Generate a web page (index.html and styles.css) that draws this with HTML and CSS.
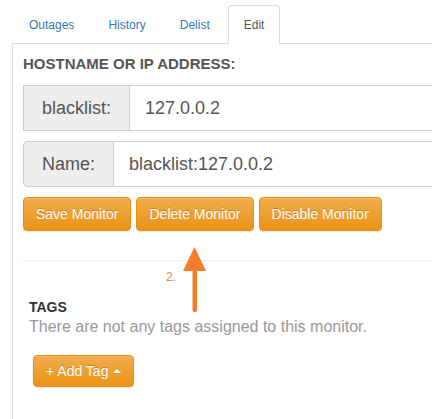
FILE: index.html
```html
<!DOCTYPE html>
<html>
<head>
<meta charset="utf-8">
<title>Edit Monitor</title>
<link rel="stylesheet" href="styles.css">
</head>
<body>
<div class="page">
  <ul class="tabs">
    <li class="tab"><a href="#">Outages</a></li>
    <li class="tab"><a href="#">History</a></li>
    <li class="tab"><a href="#">Delist</a></li>
    <li class="tab active"><a href="#">Edit</a></li>
  </ul>
  <div class="panel">
    <h4 class="heading">HOSTNAME OR IP ADDRESS:</h4>
    <div class="input-group square">
      <span class="addon">blacklist:</span>
      <input class="field" type="text" value="127.0.0.2" readonly>
    </div>
    <div class="input-group rounded">
      <span class="addon">Name:</span>
      <input class="field" type="text" value="blacklist:127.0.0.2" readonly>
    </div>
    <div class="actions">
      <button class="btn">Save Monitor</button>
      <button class="btn">Delete Monitor</button>
      <button class="btn">Disable Monitor</button>
    </div>
    <hr class="divider">
    <h5 class="tags-title">TAGS</h5>
    <p class="tags-empty">There are not any tags assigned to this monitor.</p>
    <button class="btn btn-sm add-tag">+ Add Tag <span class="caret"></span></button>
  </div>
  <span class="step">2.</span>
  <svg class="arrow" width="24" height="66" viewBox="0 0 24 66">
    <polygon points="11.5,0 0,24 23,24" fill="#f47d2a"/>
    <rect x="9.5" y="20" width="4.5" height="45" rx="2" fill="#f47d2a"/>
  </svg>
</div>
</body>
</html>
```
FILE: styles.css
```css
html, body {
  margin: 0;
  padding: 0;
  background: #fff;
  overflow: hidden;
}
body {
  font-family: "Liberation Sans", Arial, sans-serif;
  color: #333;
}
.page {
  position: relative;
  width: 432px;
  height: 419px;
  overflow: hidden;
}
.tabs {
  list-style: none;
  margin: 5px 0 0 0;
  padding: 0 0 0 13px;
  display: flex;
}
.tab {
  position: relative;
  z-index: 1;
  margin: 0 2px -1px 0;
  padding: 10px 15px;
  line-height: 18px;
  font-size: 12px;
  border: 1px solid transparent;
  border-bottom: 0;
  border-radius: 4px 4px 0 0;
}
.tab a {
  color: #337ab7;
  text-decoration: none;
}
.tab.active {
  background: #fff;
  border-color: #ddd;
}
.tab.active a {
  color: #555;
}
.panel {
  margin-left: 12px;
  border-top: 1px solid #ddd;
  border-left: 1px solid #ddd;
  padding: 10px 0 0 10px;
  height: 365px;
  width: 560px;
}
.heading {
  margin: 0 0 11px 0;
  font-size: 15px;
  line-height: 20px;
  font-weight: bold;
  color: #555;
}
.input-group {
  display: flex;
  margin-bottom: 10px;
  font-size: 18px;
}
.addon {
  background: #eee;
  border: 1px solid #ccc;
  border-right: 0;
  color: #555;
  padding: 10px 18px;
  line-height: 24px;
}
.field {
  flex: 1;
  border: 1px solid #ccc;
  padding: 10px 15px;
  line-height: 24px;
  height: 46px;
  box-sizing: border-box;
  font: inherit;
  font-size: 18px;
  color: #555;
  background: #fff;
  outline: none;
}
.rounded .addon {
  border-radius: 5px 0 0 5px;
}
.rounded .field {
  border-radius: 0 5px 5px 0;
}
.actions {
  display: flex;
  gap: 5px;
}
.btn {
  font-family: "Liberation Sans", Arial, sans-serif;
  font-size: 14px;
  line-height: 20px;
  padding: 6px 12px;
  color: #fff;
  text-shadow: 0 -1px 0 rgba(0, 0, 0, 0.2);
  background: linear-gradient(to bottom, #f0ad4e 0, #eb9316 100%);
  border: 1px solid #e38d13;
  border-radius: 4px;
  box-shadow: inset 0 1px 0 rgba(255, 255, 255, 0.15), 0 1px 1px rgba(0, 0, 0, 0.075);
  cursor: pointer;
}
.divider {
  margin: 29px 0 0 0;
  border: 0;
  border-top: 1px solid #eee;
}
.tags-title {
  margin: 36px 0 0 6px;
  font-size: 14px;
  line-height: 20px;
  font-weight: bold;
  color: #333;
}
.tags-empty {
  margin: 0 0 0 6px;
  font-size: 16px;
  line-height: 20px;
  color: #999;
}
.add-tag {
  margin: 18px 0 0 10px;
  padding: 5px 12px;
}
.caret {
  display: inline-block;
  width: 0;
  height: 0;
  margin-left: 1px;
  vertical-align: middle;
  border-left: 4px solid transparent;
  border-right: 4px solid transparent;
  border-bottom: 4px solid #fff;
  position: relative;
  top: -1px;
}
.step {
  position: absolute;
  left: 166px;
  top: 270px;
  font-size: 12px;
  line-height: 14px;
  color: #ef8753;
}
.arrow {
  position: absolute;
  left: 183px;
  top: 247px;
}
```
